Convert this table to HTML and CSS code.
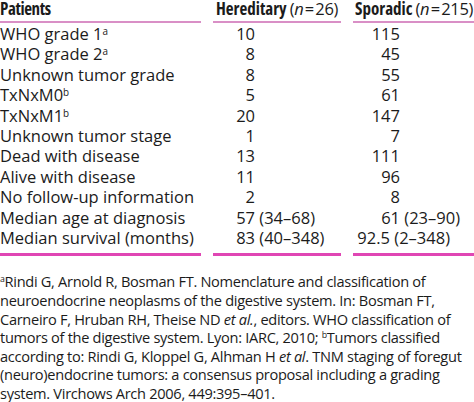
FILE: index.html
```html
<!DOCTYPE html>
<html>
<head>
<meta charset="utf-8">
<link rel="stylesheet" href="styles.css">
</head>
<body>
<div class="tbl">
  <div class="hd c1">Patients</div>
  <div class="hd c2">Hereditary <span class="np">(<i>n</i>&#8202;=&#8202;26)</span></div>
  <div class="hd c3">Sporadic <span class="np">(<i>n</i>&#8202;=&#8202;215)</span></div>

  <div class="c1 first">WHO grade 1<sup>a</sup></div>
  <div class="c2 first"><span class="n">10</span></div>
  <div class="c3 first"><span class="n">115</span></div>

  <div class="c1">WHO grade 2<sup>a</sup></div>
  <div class="c2"><span class="n">8</span></div>
  <div class="c3"><span class="n">45</span></div>

  <div class="c1">Unknown tumor grade</div>
  <div class="c2"><span class="n">8</span></div>
  <div class="c3"><span class="n">55</span></div>

  <div class="c1">TxNxM0<sup>b</sup></div>
  <div class="c2"><span class="n">5</span></div>
  <div class="c3"><span class="n">61</span></div>

  <div class="c1">TxNxM1<sup>b</sup></div>
  <div class="c2"><span class="n">20</span></div>
  <div class="c3"><span class="n">147</span></div>

  <div class="c1">Unknown tumor stage</div>
  <div class="c2"><span class="n">1</span></div>
  <div class="c3"><span class="n">7</span></div>

  <div class="c1">Dead with disease</div>
  <div class="c2"><span class="n">13</span></div>
  <div class="c3"><span class="n">111</span></div>

  <div class="c1">Alive with disease</div>
  <div class="c2"><span class="n">11</span></div>
  <div class="c3"><span class="n">96</span></div>

  <div class="c1">No follow-up information</div>
  <div class="c2"><span class="n">2</span></div>
  <div class="c3"><span class="n">8</span></div>

  <div class="c1">Median age at diagnosis</div>
  <div class="c2"><span class="n">57</span> (34–68)</div>
  <div class="c3"><span class="n">61</span> (23–90)</div>

  <div class="c1 last">Median survival (months)</div>
  <div class="c2 last"><span class="n">83</span> (40–348)</div>
  <div class="c3 last"><span class="n wide">92.5</span> (2–348)</div>
</div>
<p class="notes"><sup>a</sup>Rindi G, Arnold R, Bosman FT. Nomenclature and classification of<br>neuroendocrine neoplasms of the digestive system. In: Bosman FT,<br>Carneiro F, Hruban RH, Theise ND <i>et al.</i>, editors. WHO classification of<br>tumors of the digestive system. Lyon: IARC, 2010; <sup>b</sup>Tumors classified<br>according to: Rindi G, Kloppel G, Alhman H <i>et al</i>. TNM staging of foregut<br>(neuro)endocrine tumors: a consensus proposal including a grading<br>system. Virchows Arch 2006, 449:395–401.</p>
</body>
</html>
```
FILE: styles.css
```css
html, body {
  margin: 0;
  padding: 0;
  background: #ffffff;
  overflow: hidden;
}
body {
  width: 474px;
  height: 402px;
  font-family: "Open Sans", "Noto Sans", sans-serif;
  color: #1b1b1b;
}
.tbl {
  display: grid;
  grid-template-columns: 201px 128px 121px;
  column-gap: 12px;
  font-size: 16.5px;
  line-height: 20.4px;
}
.tbl > div {
  white-space: nowrap;
}
.hd {
  font-weight: 700;
  font-size: 17px;
  font-stretch: 75%;
  letter-spacing: 0;
  height: 21px;
  line-height: 18px;
  border-bottom: 2px solid #d98fc6;
}
.c1 { padding-left: 0; }
.hd.c1 { letter-spacing: -0.4px; }
.hd.c2 { padding-left: 3px; }
.hd.c3 { padding-left: 2px; }
.np {
  font-weight: 400;
  font-size: 16.5px;
  font-stretch: 100%;
  letter-spacing: -0.3px;
}
.first { padding-top: 1px; }
.last {
  padding-bottom: 5px;
  border-bottom: 3px solid #e046b4;
}
.n {
  display: inline-block;
  text-align: right;
  width: 42px;
}
.c3 .n { width: 47px; }
.c3 .n.wide { width: 37px; }
sup {
  font-size: 0.6em;
  line-height: 0;
  vertical-align: 0.55em;
}
.notes {
  margin: 16px 0 0 0;
  font-size: 14.6px;
  line-height: 18.6px;
  letter-spacing: -0.3px;
  white-space: nowrap;
  width: 474px;
}
```
